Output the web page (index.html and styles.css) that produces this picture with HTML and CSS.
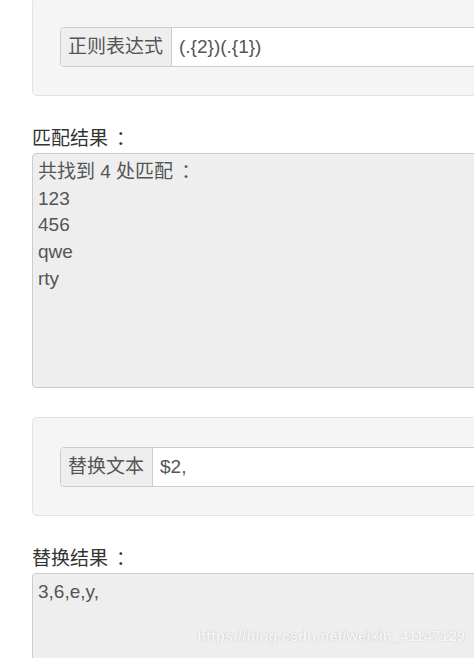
FILE: index.html
```html
<!DOCTYPE html>
<html lang="zh-CN">
<head>
<meta charset="utf-8">
<title>正则表达式测试</title>
<link rel="stylesheet" href="styles.css">
</head>
<body>
<div class="page">
  <div class="well well-first">
    <div class="input-group">
      <span class="addon">正则表达式</span>
      <input class="field" type="text" value="(.{2})(.{1})">
    </div>
  </div>

  <div class="label">匹配结果<span class="punct">：</span></div>
  <div class="result">共找到 4 处匹配<span class="punct">：</span>
123
456
qwe
rty</div>

  <div class="well">
    <div class="input-group">
      <span class="addon">替换文本</span>
      <input class="field" type="text" value="$2,">
    </div>
  </div>

  <div class="label">替换结果<span class="punct">：</span></div>
  <div class="result">3,6,e,y,</div>

  <div class="watermark">https://blog.csdn.net/weixin_41147129</div>
</div>
</body>
</html>
```

FILE: styles.css
```css
html, body {
  margin: 0;
  padding: 0;
  background: #ffffff;
  overflow: hidden;
}

body {
  width: 474px;
  height: 658px;
  font-family: "Liberation Sans", "Noto Sans CJK SC", sans-serif;
  font-size: 19px;
  color: #333333;
}

.page {
  position: relative;
  height: 658px;
  padding-left: 32px;
  overflow: hidden;
}

.well {
  box-sizing: border-box;
  width: 520px;
  margin-top: 29px;
  padding: 29px 27px 28px 27px;
  background: #f5f5f5;
  border: 1px solid #e3e3e3;
  border-radius: 5px;
}

.well-first {
  margin-top: -3px;
}

.input-group {
  display: flex;
  box-sizing: border-box;
  height: 40px;
  border: 1px solid #cccccc;
  border-radius: 4px;
  overflow: hidden;
  background: #ffffff;
}

.addon {
  display: flex;
  align-items: center;
  padding: 0 8px 0 7px;
  background: #eeeeee;
  border-right: 1px solid #cccccc;
  color: #555555;
  line-height: 26px;
  white-space: nowrap;
}

.field {
  flex: 1;
  min-width: 0;
  border: 0;
  margin: 0;
  padding: 0 7px;
  background: #ffffff;
  color: #555555;
  font-family: "Liberation Sans", "Noto Sans CJK SC", sans-serif;
  font-size: 19px;
  outline: none;
}

/* full-width colon drawn centred in its cell, as on the reference */
.punct {
  padding-left: 8px;
  margin-right: -8px;
}

.label {
  margin-top: 29px;
  margin-bottom: 1px;
  line-height: 27px;
  color: #333333;
}

.result {
  box-sizing: border-box;
  width: 520px;
  height: 235px;
  margin: 0;
  padding: 5px 5px;
  background: #eeeeee;
  border: 1px solid #cccccc;
  border-radius: 4px;
  color: #555555;
  font-size: 19px;
  line-height: 26.7px;
  white-space: pre;
  overflow: hidden;
}

.watermark {
  position: absolute;
  right: 9px;
  top: 628px;
  font-family: "Liberation Sans", sans-serif;
  font-size: 14.8px;
  font-weight: bold;
  color: rgba(255, 255, 255, 0.92);
  text-shadow: 0 0 1px rgba(140, 140, 140, 0.7);
  white-space: nowrap;
}
```
